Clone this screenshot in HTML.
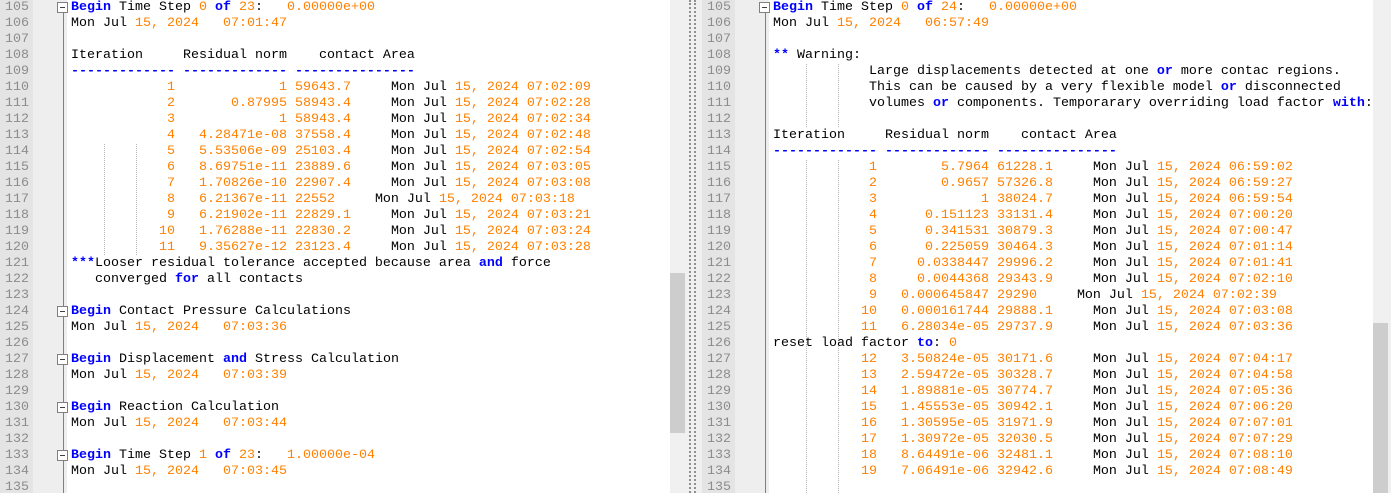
<!DOCTYPE html>
<html><head><meta charset="utf-8"><style>
*{margin:0;padding:0}
body{width:1391px;height:493px;overflow:hidden;background:#fff;position:relative;font-family:"Liberation Mono",monospace;font-size:13.33px}
pre{font-family:"Liberation Mono",monospace;font-size:13.33px;line-height:16px;position:absolute;top:0;white-space:pre}
.k{color:#0000ff;font-weight:bold}
.n{color:#ff8000}
.g1{position:absolute;top:0;height:493px;background:#e4e4e4}
.g2{position:absolute;top:0;height:493px;background:#eeeeee}
.ln{color:#8c8c8c;text-align:right}
.fl{position:absolute;width:1px;background:#808080}
.fb{position:absolute;width:9px;height:9px;border:1px solid #808080;background:#fff}
.fb:after{content:"";position:absolute;left:2px;top:4px;width:5px;height:1px;background:#404040}
.ig{position:absolute;width:1px;background:repeating-linear-gradient(to bottom,#b4b4b4 0,#b4b4b4 1px,transparent 1px,transparent 2px)}
</style></head><body>
<!-- left pane -->
<div class="g1" style="left:0;width:33px"></div>
<div class="g2" style="left:33px;width:34px"></div>
<pre class="ln" style="left:0;width:29px">105
106
107
108
109
110
111
112
113
114
115
116
117
118
119
120
121
122
123
124
125
126
127
128
129
130
131
132
133
134
135</pre>
<div class="fl" style="left:63px;top:13px;height:480px"></div>
<div class="fb" style="left:57px;top:2px"></div>
<div class="fb" style="left:57px;top:306px"></div>
<div class="fb" style="left:57px;top:354px"></div>
<div class="fb" style="left:57px;top:402px"></div>
<div class="fb" style="left:57px;top:450px"></div>
<div class="ig" style="left:104px;top:144px;height:112px"></div>
<div class="ig" style="left:136px;top:144px;height:112px"></div>
<pre style="left:71px"><span class="k">Begin</span> Time Step <span class="n">0</span> <span class="k">of</span> <span class="n">23</span>:   <span class="n">0.00000e+00</span>
Mon Jul <span class="n">15, 2024   07:01:47</span>

Iteration     Residual norm    contact Area
<span class="k">------------- ------------- ---------------</span>
<span class="n">            1             1 59643.7     </span>Mon Jul <span class="n">15, 2024 07:02:09</span>
<span class="n">            2       0.87995 58943.4     </span>Mon Jul <span class="n">15, 2024 07:02:28</span>
<span class="n">            3             1 58943.4     </span>Mon Jul <span class="n">15, 2024 07:02:34</span>
<span class="n">            4   4.28471e-08 37558.4     </span>Mon Jul <span class="n">15, 2024 07:02:48</span>
<span class="n">            5   5.53506e-09 25103.4     </span>Mon Jul <span class="n">15, 2024 07:02:54</span>
<span class="n">            6   8.69751e-11 23889.6     </span>Mon Jul <span class="n">15, 2024 07:03:05</span>
<span class="n">            7   1.70826e-10 22907.4     </span>Mon Jul <span class="n">15, 2024 07:03:08</span>
<span class="n">            8   6.21367e-11 22552     </span>Mon Jul <span class="n">15, 2024 07:03:18</span>
<span class="n">            9   6.21902e-11 22829.1     </span>Mon Jul <span class="n">15, 2024 07:03:21</span>
<span class="n">           10   1.76288e-11 22830.2     </span>Mon Jul <span class="n">15, 2024 07:03:24</span>
<span class="n">           11   9.35627e-12 23123.4     </span>Mon Jul <span class="n">15, 2024 07:03:28</span>
<span class="k">***</span>Looser residual tolerance accepted because area <span class="k">and</span> force
   converged <span class="k">for</span> all contacts

<span class="k">Begin</span> Contact Pressure Calculations
Mon Jul <span class="n">15, 2024   07:03:36</span>

<span class="k">Begin</span> Displacement <span class="k">and</span> Stress Calculation
Mon Jul <span class="n">15, 2024   07:03:39</span>

<span class="k">Begin</span> Reaction Calculation
Mon Jul <span class="n">15, 2024   07:03:44</span>

<span class="k">Begin</span> Time Step <span class="n">1</span> <span class="k">of</span> <span class="n">23</span>:   <span class="n">1.00000e-04</span>
Mon Jul <span class="n">15, 2024   07:03:45</span>
</pre>
<!-- left scrollbar -->
<div style="position:absolute;left:670px;top:0;width:16px;height:493px;background:#f0f0f0"></div>
<div style="position:absolute;left:670px;top:273px;width:15px;height:160px;background:#cdcdcd"></div>
<!-- splitter -->
<div style="position:absolute;left:686px;top:0;width:16px;height:493px;background:#f0f0f0"></div>
<div style="position:absolute;left:689px;top:0;width:3px;height:493px;border-left:2px dotted #909090;border-right:2px dotted #909090"></div>
<!-- right pane -->
<div class="g1" style="left:702px;width:33px"></div>
<div class="g2" style="left:735px;width:34px"></div>
<pre class="ln" style="left:702px;width:29px">105
106
107
108
109
110
111
112
113
114
115
116
117
118
119
120
121
122
123
124
125
126
127
128
129
130
131
132
133
134
135</pre>
<div class="fl" style="left:765px;top:13px;height:480px"></div>
<div class="fb" style="left:759px;top:2px"></div>
<div class="ig" style="left:806px;top:64px;height:64px"></div>
<div class="ig" style="left:838px;top:64px;height:64px"></div>
<div class="ig" style="left:806px;top:160px;height:333px"></div>
<div class="ig" style="left:838px;top:160px;height:333px"></div>
<pre style="left:773px"><span class="k">Begin</span> Time Step <span class="n">0</span> <span class="k">of</span> <span class="n">24</span>:   <span class="n">0.00000e+00</span>
Mon Jul <span class="n">15, 2024   06:57:49</span>

<span class="k">**</span> Warning:
            Large displacements detected at one <span class="k">or</span> more contac regions.
            This can be caused by a very flexible model <span class="k">or</span> disconnected
            volumes <span class="k">or</span> components. Temporarary overriding load factor <span class="k">with</span>:

Iteration     Residual norm    contact Area
<span class="k">------------- ------------- ---------------</span>
<span class="n">            1        5.7964 61228.1     </span>Mon Jul <span class="n">15, 2024 06:59:02</span>
<span class="n">            2        0.9657 57326.8     </span>Mon Jul <span class="n">15, 2024 06:59:27</span>
<span class="n">            3             1 38024.7     </span>Mon Jul <span class="n">15, 2024 06:59:54</span>
<span class="n">            4      0.151123 33131.4     </span>Mon Jul <span class="n">15, 2024 07:00:20</span>
<span class="n">            5      0.341531 30879.3     </span>Mon Jul <span class="n">15, 2024 07:00:47</span>
<span class="n">            6      0.225059 30464.3     </span>Mon Jul <span class="n">15, 2024 07:01:14</span>
<span class="n">            7     0.0338447 29996.2     </span>Mon Jul <span class="n">15, 2024 07:01:41</span>
<span class="n">            8     0.0044368 29343.9     </span>Mon Jul <span class="n">15, 2024 07:02:10</span>
<span class="n">            9   0.000645847 29290     </span>Mon Jul <span class="n">15, 2024 07:02:39</span>
<span class="n">           10   0.000161744 29888.1     </span>Mon Jul <span class="n">15, 2024 07:03:08</span>
<span class="n">           11   6.28034e-05 29737.9     </span>Mon Jul <span class="n">15, 2024 07:03:36</span>
reset load factor <span class="k">to</span>: <span class="n">0</span>
<span class="n">           12   3.50824e-05 30171.6     </span>Mon Jul <span class="n">15, 2024 07:04:17</span>
<span class="n">           13   2.59472e-05 30328.7     </span>Mon Jul <span class="n">15, 2024 07:04:58</span>
<span class="n">           14   1.89881e-05 30774.7     </span>Mon Jul <span class="n">15, 2024 07:05:36</span>
<span class="n">           15   1.45553e-05 30942.1     </span>Mon Jul <span class="n">15, 2024 07:06:20</span>
<span class="n">           16   1.30595e-05 31971.9     </span>Mon Jul <span class="n">15, 2024 07:07:01</span>
<span class="n">           17   1.30972e-05 32030.5     </span>Mon Jul <span class="n">15, 2024 07:07:29</span>
<span class="n">           18   8.64491e-06 32481.1     </span>Mon Jul <span class="n">15, 2024 07:08:10</span>
<span class="n">           19   7.06491e-06 32942.6     </span>Mon Jul <span class="n">15, 2024 07:08:49</span>
</pre>
<!-- right scrollbar -->
<div style="position:absolute;left:1373px;top:0;width:18px;height:493px;background:#f0f0f0"></div>
<div style="position:absolute;left:1373px;top:323px;width:15px;height:170px;background:#cdcdcd"></div>
</body></html>
